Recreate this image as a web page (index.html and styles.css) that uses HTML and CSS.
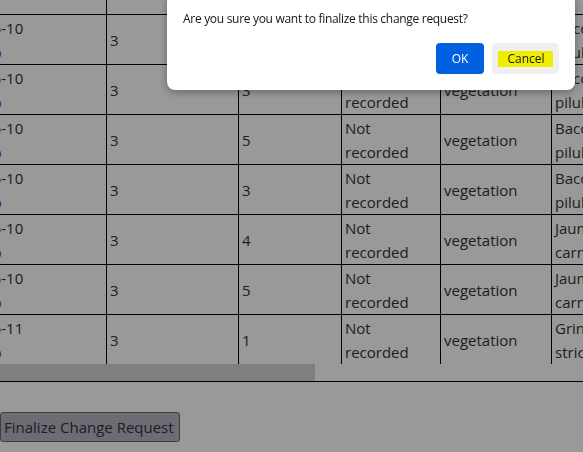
FILE: index.html
```html
<!DOCTYPE html>
<html lang="en">
<head>
<meta charset="utf-8">
<title>Change request</title>
<link rel="stylesheet" href="styles.css">
</head>
<body>
<main class="page">
  <div class="scroller">
    <div class="table-clip">
      <table class="data">
        <colgroup>
          <col class="c-date"><col class="c-plot"><col class="c-quad"><col class="c-cover"><col class="c-type"><col class="c-species"><col class="c-notes">
        </colgroup>
        <thead>
          <tr class="head"><th>Date</th><th>Plot</th><th>Quadrat</th><th>Cover</th><th>Category</th><th>Taxon</th><th>Notes</th></tr>
        </thead>
        <tbody>
          <tr><td>2019-05-10<br><a href="#">Site info</a></td><td>3</td><td>2</td><td>Not recorded</td><td>vegetation</td><td>Baccharis pilularis</td><td></td></tr>
          <tr><td>2019-05-10<br><a href="#">Site info</a></td><td>3</td><td>3</td><td>Not recorded</td><td>vegetation</td><td>Baccharis pilularis</td><td></td></tr>
          <tr><td>2019-05-10<br><a href="#">Site info</a></td><td>3</td><td>5</td><td>Not recorded</td><td>vegetation</td><td>Baccharis pilularis</td><td></td></tr>
          <tr><td>2019-05-10<br><a href="#">Site info</a></td><td>3</td><td>3</td><td>Not recorded</td><td>vegetation</td><td>Baccharis pilularis</td><td></td></tr>
          <tr><td>2019-05-10<br><a href="#">Site info</a></td><td>3</td><td>4</td><td>Not recorded</td><td>vegetation</td><td>Jaumea carnosa</td><td></td></tr>
          <tr><td>2019-05-10<br><a href="#">Site info</a></td><td>3</td><td>5</td><td>Not recorded</td><td>vegetation</td><td>Jaumea carnosa</td><td></td></tr>
          <tr><td>2019-05-11<br><a href="#">Site info</a></td><td>3</td><td>1</td><td>Not recorded</td><td>vegetation</td><td>Grindelia stricta</td><td></td></tr>
        </tbody>
      </table>
    </div>
    <div class="hscroll"><div class="thumb"></div></div>
  </div>
  <button class="finalize" type="button">Finalize Change Request</button>
</main>

<div class="backdrop"></div>
<div class="dialog" role="dialog">
  <p class="message">Are you sure you want to finalize this change request?</p>
  <div class="actions">
    <button class="btn btn-ok" type="button">OK</button>
    <button class="btn btn-cancel" type="button"><span class="mark">Cancel</span></button>
  </div>
</div>
</body>
</html>
```
FILE: styles.css
```css
html, body {
  margin: 0;
  padding: 0;
}
body {
  background: #fff;
  color: #333;
  font-family: "Open Sans", "Noto Sans", sans-serif;
  font-size: 15px;
  height: 452px;
  overflow: hidden;
}
.page {
  margin-top: -36px;
}
.scroller {
  border-bottom: 1px solid #000;
}
.table-clip {
  overflow: hidden;
}
.data {
  border-collapse: collapse;
  table-layout: fixed;
  width: 810px;
  margin-left: -59px;
  line-height: 24px;
}
.c-date { width: 165px; }
.c-plot { width: 132px; }
.c-quad { width: 103px; }
.c-cover { width: 99px; }
.c-type { width: 111px; }
.c-species { width: 100px; }
.c-notes { width: 100px; }
.data td, .data th {
  border: 1px solid #000;
  padding: 1px 3px 0;
  vertical-align: middle;
  text-align: left;
}
.data .head th {
  vertical-align: top;
  padding-bottom: 24px;
  font-weight: bold;
}
.data tbody tr:last-child td {
  border-bottom: none;
}
.data a {
  color: #2a5fc9;
  text-decoration: none;
}
.hscroll {
  height: 17px;
  display: flex;
}
.thumb {
  width: 315px;
  background: #d4d4d4;
}
.finalize {
  display: block;
  margin-top: 30px;
  font-family: inherit;
  font-size: 15px;
  line-height: 20px;
  color: #333;
  background: #b6b5c1;
  border: 1px solid #66666c;
  border-radius: 3px;
  padding: 4px 5px 4px 3px;
}
.backdrop {
  position: fixed;
  inset: 0;
  background: rgba(0, 0, 0, 0.4);
}
.dialog {
  position: fixed;
  top: -6px;
  left: 167px;
  width: 408px;
  box-sizing: border-box;
  padding: 16px;
  background: #fff;
  border-radius: 8px;
  box-shadow: 0 2px 8px rgba(0, 0, 0, 0.35);
  color: #15141a;
}
.message {
  margin: 0;
  font-size: 12px;
  letter-spacing: -0.3px;
  line-height: 18px;
}
.actions {
  display: flex;
  justify-content: flex-end;
  gap: 8px;
  margin-top: 15px;
}
.btn {
  height: 31px;
  border: none;
  border-radius: 4px;
  font-family: inherit;
  font-size: 12px;
  padding: 0;
}
.btn-ok {
  width: 48px;
  background: #0061e0;
  color: #fff;
}
.btn-cancel {
  width: 67px;
  background: #f0f0f4;
  color: #15141a;
}
.mark {
  display: inline-block;
  background: #eeee00;
  padding: 0 8px 0 9px;
  line-height: 16px;
}
```
